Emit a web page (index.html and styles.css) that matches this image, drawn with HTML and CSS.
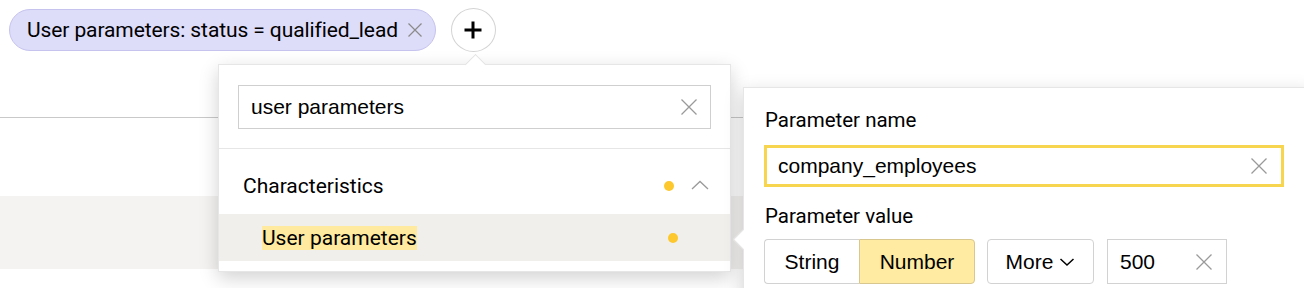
FILE: index.html
```html
<!DOCTYPE html>
<html lang="en">
<head>
<meta charset="utf-8">
<title>Filters</title>
<link rel="stylesheet" href="styles.css">
</head>
<body>
<div class="page">
  <div class="toolbar">
    <div class="chip">
      <span class="chip-text">User parameters: status = qualified_lead</span>
      <svg class="chip-x" width="16" height="16" viewBox="0 0 16 16"><path d="M1.5 1.5 14.5 14.5M14.5 1.5 1.5 14.5" stroke="#8a8a8a" stroke-width="1.2" fill="none"/></svg>
    </div>
    <button class="plus" type="button">
      <svg width="20" height="20" viewBox="0 0 20 20"><path d="M10 1.5v17M1.5 10h17" stroke="#000" stroke-width="3" fill="none"/></svg>
    </button>
  </div>
  <div class="content">
    <div class="content-line"></div>
    <div class="content-gap"></div>
    <div class="content-band"></div>
  </div>

  <div class="popup">
    <div class="popup-notch"></div>
    <div class="popup-search">
      <div class="search-input">
        <span class="search-text">user parameters</span>
        <svg width="18" height="18" viewBox="0 0 18 18"><path d="M1.5 1.5 16.5 16.5M16.5 1.5 1.5 16.5" stroke="#9a9a9a" stroke-width="1.3" fill="none"/></svg>
      </div>
    </div>
    <div class="popup-list">
      <div class="group-row">
        <span class="group-title">Characteristics</span>
        <span class="row-marks">
          <span class="dot"></span>
          <svg class="chev" width="18" height="10" viewBox="0 0 18 10"><path d="M1 9 9 1.5 17 9" stroke="#9a9a9a" stroke-width="1.3" fill="none"/></svg>
        </span>
      </div>
      <div class="item-row">
        <span class="item-title">User parameters</span>
        <span class="dot"></span>
      </div>
    </div>
  </div>

  <div class="panel">
    <div class="panel-notch"></div>
    <div class="label">Parameter name</div>
    <div class="name-input">
      <span class="field-text">company_employees</span>
      <svg width="18" height="18" viewBox="0 0 18 18"><path d="M1.5 1.5 16.5 16.5M16.5 1.5 1.5 16.5" stroke="#9a9a9a" stroke-width="1.3" fill="none"/></svg>
    </div>
    <div class="label label-value">Parameter value</div>
    <div class="value-row">
      <div class="segmented">
        <button class="seg seg-string" type="button">String</button>
        <button class="seg seg-number" type="button">Number</button>
      </div>
      <button class="more" type="button">More
        <svg width="16" height="10" viewBox="0 0 16 10"><path d="M1.5 2 8 8 14.5 2" stroke="#000" stroke-width="1.5" fill="none"/></svg>
      </button>
      <div class="num-input">
        <span class="field-text">500</span>
        <svg width="18" height="18" viewBox="0 0 18 18"><path d="M1.5 1.5 16.5 16.5M16.5 1.5 1.5 16.5" stroke="#9a9a9a" stroke-width="1.3" fill="none"/></svg>
      </div>
    </div>
  </div>
</div>
</body>
</html>
```

FILE: styles.css
```css
* { box-sizing: border-box; }
html, body { margin: 0; padding: 0; background: #fff; }
body { font-family: Roboto, "Noto Sans", sans-serif; color: #000; overflow: hidden; }

.page { position: relative; width: 1304px; height: 288px; overflow: hidden; }

.toolbar {
  display: flex;
  align-items: center;
  gap: 15px;
  padding: 7px 0 0 9px;
  height: 52px;
}

.chip {
  display: flex;
  align-items: center;
  gap: 9px;
  height: 42px;
  padding: 0 12px 0 17px;
  border-radius: 21px;
  background: #dddcf9;
  border: 1px solid #c6c4ee;
  font-size: 21px;
  letter-spacing: -0.1px;
}
.chip-x { flex: none; }

.plus {
  width: 45px;
  height: 44px;
  border-radius: 50%;
  border: 1px solid #d4d4d4;
  background: #fff;
  display: flex;
  align-items: center;
  justify-content: center;
  padding: 0;
}

.content { margin-top: 0; }
.content-line { height: 66px; border-bottom: 1px solid #c9c9c9; }
.content-gap { height: 78px; }
.content-band { height: 73px; background: #f4f3f1; }

.popup {
  position: absolute;
  left: 218px;
  top: 64px;
  width: 513px;
  height: 208px;
  background: #fff;
  border: 1px solid #e6e6e6;
  box-shadow: 0 6px 18px rgba(0,0,0,0.18);
}
.popup-notch {
  position: absolute;
  left: 249px;
  top: -8px;
  width: 15px;
  height: 15px;
  background: #fff;
  border-left: 1px solid #e2e2e2;
  border-top: 1px solid #e2e2e2;
  transform: rotate(45deg);
}
.popup-search {
  position: relative;
  padding: 20px 19px 19px;
  border-bottom: 1px solid #e6e6e6;
}
.search-input {
  display: flex;
  align-items: center;
  justify-content: space-between;
  height: 44px;
  padding: 0 12px 0 12px;
  border: 1px solid #cfcfcf;
  font-family: "Liberation Sans", Arial, sans-serif;
  font-size: 21px;
}

.popup-list { padding-top: 15px; }
.group-row {
  display: flex;
  align-items: center;
  justify-content: space-between;
  height: 44px;
  padding: 0 21px 0 24px;
  font-size: 21px;
}
.row-marks { display: flex; align-items: center; gap: 17px; }
.chev { margin-top: -3px; }
.dot {
  display: inline-block;
  width: 10px;
  height: 10px;
  border-radius: 50%;
  background: #fcc82d;
}
.item-row {
  margin-top: 6px;
  display: flex;
  align-items: center;
  justify-content: space-between;
  height: 47px;
  padding: 0 52px 0 43px;
  background: #f0efeb;
  font-size: 21px;
}
.item-title { background: #ffeaa0; line-height: 24px; }

.panel {
  position: absolute;
  left: 743px;
  top: 87px;
  width: 570px;
  height: 230px;
  background: #fff;
  border: 1px solid #e6e6e6;
  box-shadow: 0 6px 18px rgba(0,0,0,0.18);
  padding: 20px 21px 0 20px;
}
.panel-notch {
  position: absolute;
  left: -8px;
  top: 144px;
  width: 15px;
  height: 15px;
  background: #fff;
  border-left: 1px solid #e2e2e2;
  border-bottom: 1px solid #e2e2e2;
  transform: rotate(45deg);
}
.label { font-size: 20.5px; line-height: 24px; padding-left: 1px; }
.name-input {
  margin-top: 13px;
  width: 520px;
  height: 42px;
  border: 3px solid #f7d54f;
  display: flex;
  align-items: center;
  justify-content: space-between;
  padding: 0 13px 0 11px;
}
.field-text { font-family: "Liberation Sans", Arial, sans-serif; font-size: 21px; }
.label-value { margin-top: 17px; }

.value-row { margin-top: 11px; display: flex; align-items: center; }
.segmented { display: flex; }
.seg, .more {
  height: 45px;
  font-family: "Liberation Sans", Arial, sans-serif;
  font-size: 21px;
  color: #000;
  background: #fff;
  border: 1px solid #d2d2d2;
  padding: 0;
}
.seg-string { width: 95px; border-radius: 4px 0 0 4px; border-right: none; }
.seg-number { width: 116px; border-radius: 0 4px 4px 0; background: #ffeba1; border-color: #d8c78e; }
.more {
  margin-left: 12px;
  width: 107px;
  border-radius: 4px;
  display: flex;
  align-items: center;
  justify-content: center;
  gap: 6px;
}
.num-input {
  margin-left: 13px;
  width: 120px;
  height: 45px;
  border: 1px solid #d2d2d2;
  display: flex;
  align-items: center;
  justify-content: space-between;
  padding: 0 13px 0 12px;
}
```
